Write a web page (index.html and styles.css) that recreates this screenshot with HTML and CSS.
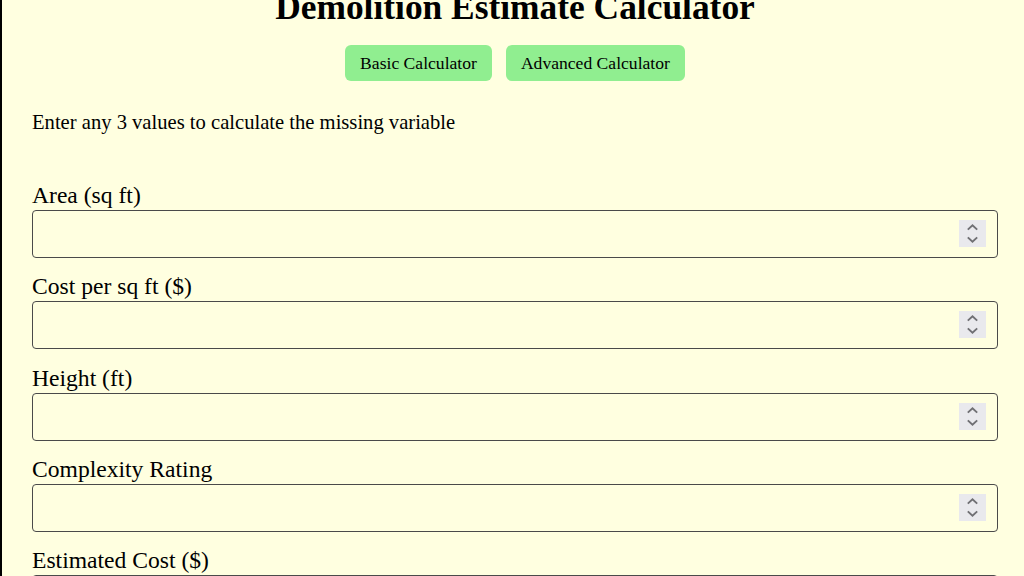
FILE: index.html
```html
<!DOCTYPE html>
<html lang="en">
<head>
<meta charset="utf-8">
<title>Demolition Estimate Calculator</title>
<link rel="stylesheet" href="styles.css">
</head>
<body>
<div class="page">
  <h1 class="title">Demolition Estimate Calculator</h1>
  <div class="tabs">
    <button class="tab" type="button">Basic Calculator</button>
    <button class="tab" type="button">Advanced Calculator</button>
  </div>
  <p class="intro">Enter any 3 values to calculate the missing variable</p>
  <form class="form">
    <div class="field">
      <label class="label" for="area">Area (sq ft)</label>
      <div class="control">
        <input class="input" id="area" type="number">
        <span class="spin"><svg width="27" height="27" viewBox="0 0 27 27"><path d="M8.8 9.6L13.5 5.2L18.2 9.6M8.8 17.4L13.5 21.8L18.2 17.4" fill="none" stroke="#707074" stroke-width="1.9"/></svg></span>
      </div>
    </div>
    <div class="field">
      <label class="label" for="cost">Cost per sq ft ($)</label>
      <div class="control">
        <input class="input" id="cost" type="number">
        <span class="spin"><svg width="27" height="27" viewBox="0 0 27 27"><path d="M8.8 9.6L13.5 5.2L18.2 9.6M8.8 17.4L13.5 21.8L18.2 17.4" fill="none" stroke="#707074" stroke-width="1.9"/></svg></span>
      </div>
    </div>
    <div class="field">
      <label class="label" for="height">Height (ft)</label>
      <div class="control">
        <input class="input" id="height" type="number">
        <span class="spin"><svg width="27" height="27" viewBox="0 0 27 27"><path d="M8.8 9.6L13.5 5.2L18.2 9.6M8.8 17.4L13.5 21.8L18.2 17.4" fill="none" stroke="#707074" stroke-width="1.9"/></svg></span>
      </div>
    </div>
    <div class="field">
      <label class="label" for="complexity">Complexity Rating</label>
      <div class="control">
        <input class="input" id="complexity" type="number">
        <span class="spin"><svg width="27" height="27" viewBox="0 0 27 27"><path d="M8.8 9.6L13.5 5.2L18.2 9.6M8.8 17.4L13.5 21.8L18.2 17.4" fill="none" stroke="#707074" stroke-width="1.9"/></svg></span>
      </div>
    </div>
    <div class="field">
      <label class="label" for="estimate">Estimated Cost ($)</label>
      <div class="control">
        <input class="input" id="estimate" type="number">
        <span class="spin"><svg width="27" height="27" viewBox="0 0 27 27"><path d="M8.8 9.6L13.5 5.2L18.2 9.6M8.8 17.4L13.5 21.8L18.2 17.4" fill="none" stroke="#707074" stroke-width="1.9"/></svg></span>
      </div>
    </div>
  </form>
</div>
</body>
</html>
```

FILE: styles.css
```css
html, body {
  margin: 0;
  padding: 0;
  background: #ffffe0;
  overflow: hidden;
}

body {
  font-family: "Liberation Serif", "Times New Roman", serif;
  color: #000;
}

.page {
  border-left: 2px solid #000;
  padding: 0 26px 0 30px;
  min-height: 100vh;
  box-sizing: border-box;
}

.title {
  margin: -13px 0 0;
  font-size: 35.4px;
  line-height: 40px;
  font-weight: bold;
  text-align: center;
}

.tabs {
  display: flex;
  justify-content: center;
  gap: 14px;
  margin-top: 18px;
}

.tab {
  font-family: "Liberation Serif", "Times New Roman", serif;
  font-size: 17.6px;
  line-height: 20px;
  padding: 8px 15px;
  background: #90ee90;
  color: #000;
  border: none;
  border-radius: 6px;
}

.intro {
  margin: 29px 0 47px;
  font-size: 20.6px;
  line-height: 24px;
}

.form {
  display: flex;
  flex-direction: column;
  gap: 14.33px;
}

.field {
  display: flex;
  flex-direction: column;
  gap: 1px;
}

.label {
  font-size: 23.6px;
  line-height: 28px;
}

.control {
  position: relative;
}

.input {
  display: block;
  width: 100%;
  height: 48px;
  box-sizing: border-box;
  margin: 0;
  padding: 0 12px;
  border: 1px solid #4a4a4a;
  border-radius: 4px;
  background: transparent;
  font-family: "Liberation Serif", "Times New Roman", serif;
  font-size: 18px;
  -moz-appearance: textfield;
}

.input::-webkit-inner-spin-button,
.input::-webkit-outer-spin-button {
  -webkit-appearance: none;
  margin: 0;
}

.spin {
  position: absolute;
  right: 12px;
  top: 10px;
  width: 27px;
  height: 27px;
  background: #e9e9ed;
  display: block;
}

.spin svg {
  display: block;
}
```
